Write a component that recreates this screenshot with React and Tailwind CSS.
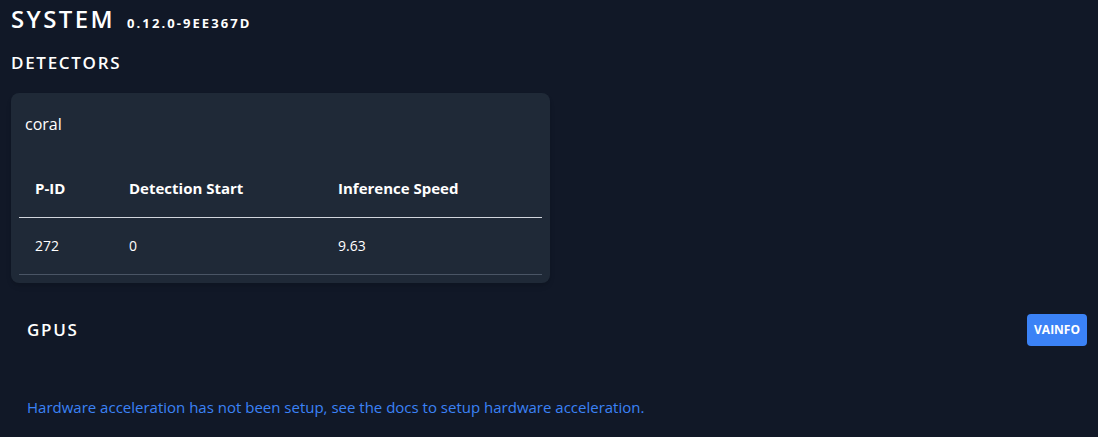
export default function App() {
  return (
    <div className="min-h-screen bg-[#111827] text-white font-['Open_Sans',sans-serif] px-[11px] pt-[3px]">
      {/* header */}
      <div className="flex items-baseline gap-3">
        <h1 className="text-2xl font-semibold tracking-widest uppercase">System</h1>
        <span className="text-[13px] font-bold tracking-[0.16em] uppercase">0.12.0-9ee367d</span>
      </div>

      <h2 className="mt-[15px] text-[17px] font-semibold tracking-widest uppercase">Detectors</h2>

      {/* detector card */}
      <div className="mt-[17px] w-[539px] rounded-lg bg-[#1f2937] shadow-md px-[8px] pt-[19px] pb-[8px]">
        <div className="px-[6px] text-base">coral</div>
        <table className="mt-[24px] w-full text-left text-sm">
          <thead>
            <tr className="border-b border-gray-300">
              <th className="pl-[16px] py-[18px] w-[110px] text-[15px] font-bold">P-ID</th>
              <th className="px-0 py-[18px] w-[209px] text-[15px] font-bold">Detection Start</th>
              <th className="px-0 py-[18px] text-[15px] font-bold">Inference Speed</th>
            </tr>
          </thead>
          <tbody>
            <tr className="border-b border-gray-600">
              <td className="pl-[16px] py-[18px]">272</td>
              <td className="py-[18px]">0</td>
              <td className="py-[18px]">9.63</td>
            </tr>
          </tbody>
        </table>
      </div>

      {/* gpus */}
      <div className="mt-[31px] flex items-center justify-between pl-[16px]">
        <h2 className="text-[17px] font-semibold tracking-widest uppercase">GPUs</h2>
        <button className="h-8 px-[7px] rounded bg-[#3b82f6] text-xs font-bold text-white uppercase">vainfo</button>
      </div>

      <p className="mt-[50px] px-[16px] text-[15px] text-[#3b82f6]">
        Hardware acceleration has not been setup, see the docs to setup hardware acceleration.
      </p>
    </div>
  );
}
